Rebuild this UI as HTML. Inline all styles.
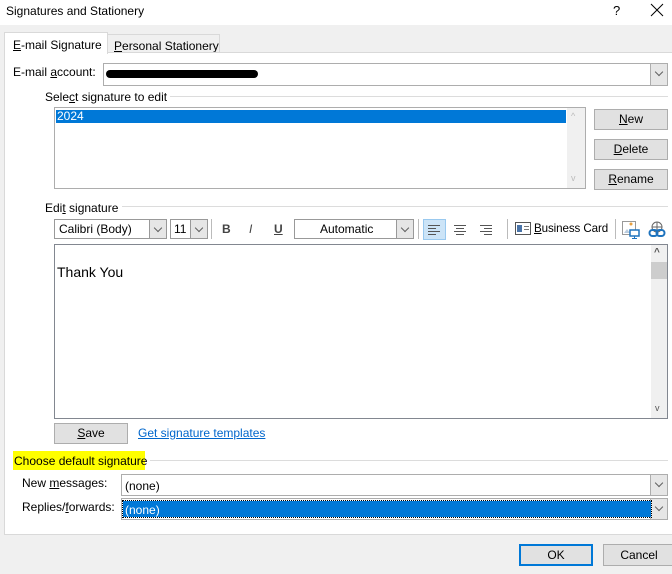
<!DOCTYPE html>
<html><head><style>
*{margin:0;padding:0;box-sizing:border-box}
body{width:672px;height:574px;background:#f0f0f0;font-family:"Liberation Sans",sans-serif;font-size:12px;color:#000;position:relative;overflow:hidden}
.a{position:absolute;white-space:nowrap}
.combo{position:absolute;background:#fff;border:1px solid #adadad}
.dd{position:absolute;right:0;top:0;bottom:0;width:17px;background:#e6e6e6;border-left:1px solid #adadad}
.dd:after{content:"";position:absolute;left:5px;top:5px;width:5px;height:5px;border-right:1px solid #606060;border-bottom:1px solid #606060;transform:rotate(45deg)}
.btn{position:absolute;background:#e1e1e1;border:1px solid #adadad;text-align:center;line-height:18px}
.line{position:absolute;height:1px;background:#dcdcdc}
u{text-decoration:underline}
</style></head><body>
<div class="a" style="left:0;top:0;width:672px;height:25px;background:#fff"></div>
<div class="a" style="left:6px;top:4px;font-size:12px">Signatures and Stationery</div>
<div class="a" style="left:613px;top:3px;font-size:13px">?</div>
<svg class="a" style="left:650px;top:3px" width="14" height="14"><path d="M1 1L13 13M13 1L1 13" stroke="#000" stroke-width="1"/></svg>

<div class="a" style="left:107px;top:34px;width:113px;height:19px;background:#f0f0f0;border:1px solid #d9d9d9"></div>
<div class="a" style="left:114px;top:39px"><u>P</u>ersonal Stationery</div>
<div class="a" style="left:4px;top:52px;width:672px;height:483px;background:#fff;border:1px solid #d9d9d9"></div>
<div class="a" style="left:4px;top:32px;width:104px;height:22px;background:#fff;border:1px solid #d9d9d9;border-bottom:none"></div>
<div class="a" style="left:13px;top:38px"><u>E</u>-mail Signature</div>

<div class="a" style="left:13px;top:65px">E-mail <u>a</u>ccount:</div>
<div class="combo" style="left:103px;top:63px;width:565px;height:23px"><div class="dd"></div></div>
<div class="a" style="left:106px;top:70px;width:152px;height:8px;background:#000;border-radius:4px"></div>

<div class="a" style="left:45px;top:90px">Sele<u>c</u>t signature to edit</div>
<div class="line" style="left:170px;top:96px;width:498px"></div>
<div class="a" style="left:54px;top:107px;width:532px;height:82px;background:#fff;border:1px solid #adadad"></div>
<div class="a" style="left:56px;top:110px;width:510px;height:13px;background:#0078d7;color:#fff;line-height:13px;padding-left:1px">2024</div>
<div class="a" style="left:567px;top:108px;width:18px;height:80px;background:#f0f0f0"></div>
<div class="a" style="left:571px;top:111px;font-size:9px;color:#bbb">^</div>
<div class="a" style="left:571px;top:173px;font-size:9px;color:#bbb">v</div>
<div class="btn" style="left:594px;top:109px;width:74px;height:21px"><u>N</u>ew</div>
<div class="btn" style="left:594px;top:139px;width:74px;height:21px"><u>D</u>elete</div>
<div class="btn" style="left:594px;top:169px;width:74px;height:21px"><u>R</u>ename</div>

<div class="a" style="left:45px;top:201px">Edi<u>t</u> signature</div>
<div class="line" style="left:122px;top:206px;width:546px"></div>
<div class="combo" style="left:54px;top:219px;width:113px;height:20px;border-color:#999"><div class="dd" style="border-color:#999"></div><span class="a" style="left:4px;top:2px">Calibri (Body)</span></div>
<div class="combo" style="left:170px;top:219px;width:38px;height:20px;border-color:#999"><div class="dd" style="border-color:#999"></div><span class="a" style="left:3px;top:2px">11</span></div>
<div class="a" style="left:211px;top:219px;width:1px;height:20px;background:#bbb"></div>
<div class="a" style="left:222px;top:222px;font-weight:bold;color:#444">B</div>
<div class="a" style="left:249px;top:222px;font-style:italic;color:#444">I</div>
<div class="a" style="left:274px;top:222px;text-decoration:underline;font-weight:bold;color:#444">U</div>
<div class="combo" style="left:294px;top:219px;width:120px;height:20px;border-color:#999"><div class="dd" style="border-color:#999"></div><span class="a" style="left:25px;top:2px">Automatic</span></div>
<div class="a" style="left:418px;top:219px;width:1px;height:20px;background:#bbb"></div>
<div class="a" style="left:423px;top:219px;width:23px;height:21px;background:#cce4f7;border:1px solid #99c9ef"></div>
<svg class="a" style="left:423px;top:219px" width="90" height="21">
<g stroke="#555" stroke-width="1"><path d="M5 6.5h12M5 9.5h8M5 12.5h12M5 15.5h8"/><path d="M31 6.5h12M33 9.5h8M31 12.5h12M33 15.5h8"/><path d="M57 6.5h12M61 9.5h8M57 12.5h12M61 15.5h8"/></g></svg>
<div class="a" style="left:507px;top:219px;width:1px;height:20px;background:#bbb"></div>
<svg class="a" style="left:515px;top:222px" width="16" height="13"><rect x="0.5" y="0.5" width="15" height="12" fill="#fff" stroke="#555"/><rect x="2" y="3" width="5" height="7" fill="#4a74a8"/><path d="M9 4.5h5M9 7.5h5" stroke="#777"/></svg>
<div class="a" style="left:534px;top:222px;font-size:11.6px;letter-spacing:-0.1px"><u>B</u>usiness Card</div>
<div class="a" style="left:615px;top:219px;width:1px;height:20px;background:#bbb"></div>
<svg class="a" style="left:622px;top:221px" width="18" height="18"><rect x="0.5" y="0.5" width="13" height="13" fill="#fff" stroke="#999"/><circle cx="9" cy="3" r="1.5" fill="#e8a040"/><path d="M2 12l3-4 3 4z" fill="#bcd"/><rect x="8" y="9" width="9" height="6" fill="#fff" stroke="#1e73be" stroke-width="1.5"/><path d="M12.5 15v2M10 17.5h5" stroke="#1e73be"/></svg>
<svg class="a" style="left:648px;top:221px" width="18" height="18"><circle cx="9" cy="6" r="5" fill="none" stroke="#666"/><path d="M4 6h10M9 1v10" stroke="#666"/><rect x="1.5" y="9" width="8" height="6" rx="3" fill="none" stroke="#1e73be" stroke-width="2"/><rect x="8.5" y="9" width="8" height="6" rx="3" fill="none" stroke="#1e73be" stroke-width="2"/></svg>

<div class="a" style="left:54px;top:244px;width:614px;height:175px;background:#fff;border:1px solid #828790"></div>
<div class="a" style="left:651px;top:245px;width:16px;height:173px;background:#f0f0f0"></div>
<div class="a" style="left:651px;top:262px;width:16px;height:17px;background:#cdcdcd"></div>
<div class="a" style="left:654px;top:247px;font-size:10px;color:#555;font-weight:bold">^</div>
<div class="a" style="left:655px;top:403px;font-size:9px;color:#555">v</div>
<div class="a" style="left:57px;top:264px;font-size:14px">Thank You</div>

<div class="btn" style="left:54px;top:423px;width:74px;height:21px"><u>S</u>ave</div>
<div class="a" style="left:138px;top:426px;color:#0066cc;text-decoration:underline">Get signature templates</div>

<div class="a" style="left:13px;top:451px;width:132px;height:19px;background:#ffff00"></div>
<div class="a" style="left:14px;top:454px">Choose default signature</div>
<div class="line" style="left:150px;top:460px;width:518px"></div>
<div class="a" style="left:22px;top:476px">New <u>m</u>essages:</div>
<div class="combo" style="left:121px;top:474px;width:547px;height:22px"><div class="dd"></div><span class="a" style="left:3px;top:4px">(none)</span></div>
<div class="a" style="left:22px;top:500px">Replies/<u>f</u>orwards:</div>
<div class="combo" style="left:121px;top:498px;width:547px;height:22px"><div class="dd"></div><span class="a" style="left:1px;top:2px;width:528px;height:16px;background:#0078d7;color:#fff;outline:1px dotted #000;padding:2px 0 0 2px">(none)</span></div>

<div class="btn" style="left:519px;top:544px;width:74px;height:22px;border:2px solid #0078d7;line-height:18px">OK</div>
<div class="btn" style="left:603px;top:544px;width:72px;height:22px;line-height:20px">Cancel</div>
</body></html>
